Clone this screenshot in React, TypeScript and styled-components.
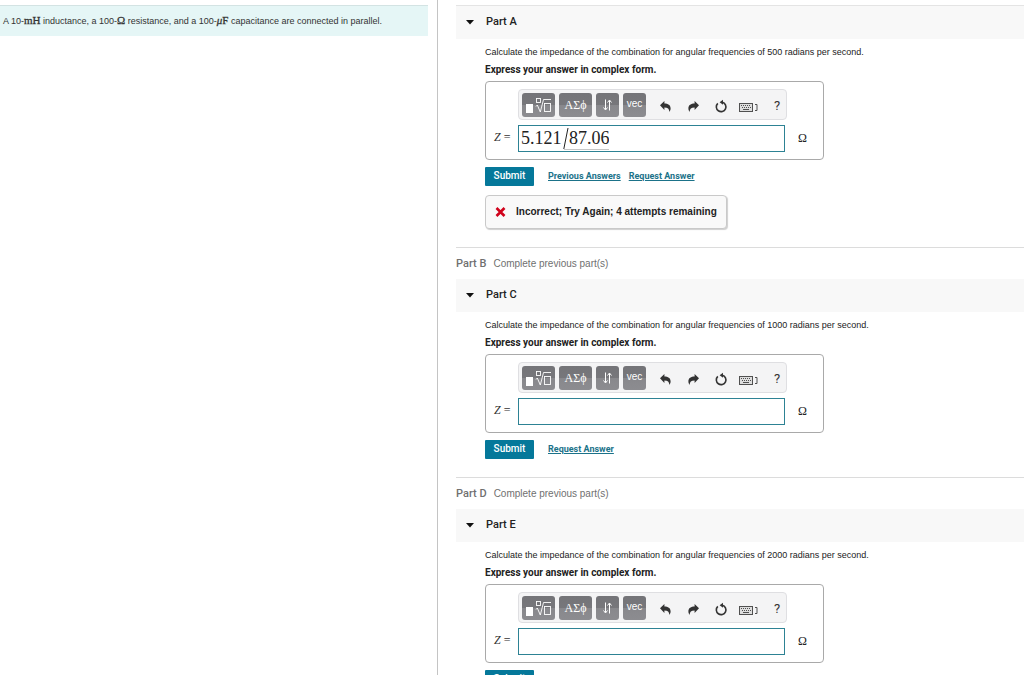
import React from "react";
import styled, { createGlobalStyle } from "styled-components";

const sans = `"Liberation Sans", Arial, sans-serif`;
const ui = `Roboto, "Liberation Sans", sans-serif`;
const serif = `"Liberation Serif", "Times New Roman", serif`;

const GlobalStyle = createGlobalStyle`
  *, *::before, *::after { box-sizing: border-box; }
  body { margin: 0; background: #fff; color: #222; font: 9px/18px ${sans}; }
  h2, p { margin: 0; }
  button, input { font: inherit; color: inherit; margin: 0; padding: 0; border: 0; background: none; }
  button { cursor: pointer; }
`;

const Page = styled.div`
  display: flex;
  height: 100vh;
  overflow: hidden;
`;

const Problem = styled.aside`
  flex: 0 0 438px;
  padding: 5px 9px 0 0;
  border-right: 1px solid #c4c4c4;
`;

const Statement = styled.p`
  padding: 6px 0 6px 3px;
  border-top: 1px solid #d3e3e3;
  background: #e5f6f6;
  color: #333;
`;

const Unit = styled.span`
  font-family: ${serif};
  font-size: 11px;
  line-height: 12px;
  -webkit-text-stroke: 0.3px currentColor;
`;

const Parts = styled.main`
  flex: 1;
  min-width: 0;
  padding: 5px 0 0 18px;
`;

const PartSection = styled.section<{ $first?: boolean }>`
  border-top: ${(p) => (p.$first ? "1px solid #e4e4e4" : "0")};
`;

const PartHeader = styled.button`
  display: flex;
  align-items: center;
  gap: 12px;
  width: 100%;
  height: 33px;
  padding: 0 10px 1px;
  background: #f8f8f8;
  font: 500 11px/18px ${ui};
  color: #222;
`;

const PartBody = styled.div`
  padding: 4px 29px 18px;
`;

const Instruction = styled.p`
  font: bold 10px/18px ${ui};
  margin-bottom: 2px;
`;

const AnswerBox = styled.div`
  display: grid;
  grid-template-columns: 24px 269px;
  row-gap: 5px;
  align-items: center;
  width: 339px;
  padding: 7px 8px;
  border: 1px solid #a9a9a9;
  border-radius: 4px;
`;

const Toolbar = styled.div`
  grid-column: 2;
  display: flex;
  align-items: center;
  height: 31px;
  padding: 0 3px;
  border: 1px solid #dfdfe2;
  border-radius: 4px;
  background: #f4f4f5;
`;

const PaletteKeys = styled.div`
  display: flex;
  gap: 4px;
  margin-right: 5px;
`;

const PaletteKey = styled.button<{ $wide?: boolean }>`
  display: flex;
  align-items: center;
  justify-content: center;
  width: ${(p) => (p.$wide ? 33 : 23)}px;
  height: 24px;
  border-radius: 3px;
  background: linear-gradient(#747478, #77777b 50%, #88888c 50%, #8c8c90);
  color: #fff;
`;

const GreekText = styled.span`
  font: 12px/18px ${serif};
`;

const VecText = styled.span`
  padding-bottom: 2px;
  font: 10px/18px ${sans};
`;

const ToolKeys = styled.div`
  display: flex;
  align-items: center;
  padding-top: 3px;
`;

const ToolKey = styled.button`
  display: flex;
  align-items: center;
  justify-content: center;
  width: 28px;
  height: 20px;
  color: #333;
  font: 13px/18px ${ui};
`;

const FieldLabel = styled.label`
  padding-bottom: 3px;
  font: 12px/18px ${serif};
  color: #333;
`;

const FieldRow = styled.div`
  display: flex;
  align-items: center;
`;

const fieldFrame = `
  flex: 0 0 267px;
  height: 27px;
  border: 1px solid #2d8294;
  background: #fff;
  font: 18px/25px ${serif};
`;

const Field = styled.input`
  && { ${fieldFrame} padding: 0 3px; }
`;

const PhasorFrame = styled.div`
  ${fieldFrame}
  display: flex;
  align-items: center;
  padding-left: 2px;
`;

const PhasorInput = styled.input`
  width: 42px;
  height: 23px;
`;

const AngleInput = styled(PhasorInput)`
  && {
    width: 40px;
    border-bottom: 1px solid #c6c6c6;
  }
`;

const OhmUnit = styled.span`
  margin-left: 13px;
  padding-bottom: 2px;
  font: 12px/18px ${serif};
  color: #222;
`;

const Actions = styled.div`
  display: flex;
  align-items: center;
  gap: 8px;
  height: 19px;
  margin-top: 7px;
`;

const Submit = styled.button`
  && {
    width: 49px;
    height: 19px;
    margin-right: 6px;
    padding-bottom: 1px;
    border-radius: 1px;
    background: #05789a;
    color: #fff;
    font: 500 10px/18px ${ui};
  }
`;

const ActionLink = styled.a`
  padding-bottom: 1px;
  font: bold 9px/18px ${ui};
  color: #1b7289;
`;

const Feedback = styled.div`
  display: inline-flex;
  align-items: center;
  gap: 10px;
  height: 34px;
  margin-top: 9px;
  padding: 0 9px;
  border: 1px solid #c9c9c9;
  border-radius: 4px;
  box-shadow: 1px 1px 1px #d0d0d0;
  background: #f9f9f9;
  font: bold 10px/18px ${sans};
  vertical-align: top;
`;

const LockedPart = styled.section`
  display: flex;
  align-items: center;
  gap: 7px;
  height: 32px;
  border-top: 1px solid #dcdcdc;
  font: 10px/18px ${sans};
  color: #707070;
`;

const LockedName = styled.h2`
  font: 500 11px/18px ${ui};
`;

const TemplateIcon = () => (
  <svg width="27" height="18" viewBox="0 0 27 18" fill="none" stroke="#fff">
    <rect x="1" y="8" width="7" height="9" fill="#fff" stroke="none" />
    <rect x="11.5" y="2.5" width="4" height="4" strokeWidth=".9" />
    <path d="M11 10.500l1.300-1.500 3 7 3.200-12.500h7.500" strokeWidth=".9" />
    <rect x="19.5" y="7.500" width="6" height="8" strokeWidth=".9" />
  </svg>
);

const ArrowsIcon = () => (
  <svg width="11" height="14" viewBox="0 0 11 14" fill="none" stroke="#fff">
    <path d="M3.500 1.500v10M1.500 9.500l2 2.500 2-2.500M7.500 12.500v-10M5.500 4.500l2-2.500 2 2.500" />
  </svg>
);

const UndoIcon = () => (
  <svg width="11" height="11" viewBox="0 0 11 11" fill="currentColor">
    <path d="M0 4.300L4.400 0v2.600c3.600 0 6.200 1.500 6.200 4.800 0 1.300-.5 2.500-1.300 3.400 .1-2.800-1.600-4.300-4.900-4.300v2.500z" />
  </svg>
);

const RedoIcon = () => (
  <svg width="11" height="11" viewBox="0 0 11 11" fill="currentColor">
    <path d="M11 4.300L6.600 0v2.600C3 2.600.4 4.100.4 7.400c0 1.300.5 2.500 1.300 3.400-.1-2.800 1.600-4.300 4.900-4.300v2.500z" />
  </svg>
);

const ResetIcon = () => (
  <svg width="14" height="14" viewBox="0 0 14 14">
    <path d="M3.800 4.400A4.800 4.800 0 1 0 8.300 3.200" fill="none" stroke="currentColor" strokeWidth="1.600" />
    <path d="M5.600 3.200L9 .8v5z" fill="currentColor" />
  </svg>
);

const KeyboardIcon = () => (
  <svg width="20" height="14" viewBox="0 0 20 14" fill="none">
    <rect x=".5" y="4.500" width="13" height="8" fill="#dedede" stroke="#505050" />
    <path d="M2 6.500h10M3 8.500h9" stroke="#505050" strokeDasharray="1 1" />
    <path d="M4 10.500h6" stroke="#505050" />
    <path d="M16 5.500h2v6h-2" stroke="#505050" />
  </svg>
);

const CaretIcon = () => (
  <svg width="8" height="5" viewBox="0 0 8 5">
    <path d="M0 0h8L4 4.500z" fill="#111" />
  </svg>
);

const CrossIcon = () => (
  <svg width="11" height="10" viewBox="0 0 11 10">
    <path d="M1.500 1l8 8M9.500 1l-8 8" stroke="#d0021b" strokeWidth="2.600" />
  </svg>
);

const AngleMark = () => (
  <svg width="6" height="25" viewBox="0 0 6 25">
    <path d="M.8 23L5 2" stroke="#222" fill="none" />
    <path d="M1 23.500h5" stroke="#c6c6c6" />
  </svg>
);

function MathToolbar() {
  return (
    <Toolbar>
      <PaletteKeys>
        <PaletteKey $wide aria-label="Templates"><TemplateIcon /></PaletteKey>
        <PaletteKey $wide><GreekText>ΑΣϕ</GreekText></PaletteKey>
        <PaletteKey aria-label="Arrows"><ArrowsIcon /></PaletteKey>
        <PaletteKey><VecText>vec</VecText></PaletteKey>
      </PaletteKeys>
      <ToolKeys>
        <ToolKey aria-label="Undo"><UndoIcon /></ToolKey>
        <ToolKey aria-label="Redo"><RedoIcon /></ToolKey>
        <ToolKey aria-label="Reset"><ResetIcon /></ToolKey>
        <ToolKey aria-label="Keyboard shortcuts"><KeyboardIcon /></ToolKey>
        <ToolKey aria-label="Help">?</ToolKey>
      </ToolKeys>
    </Toolbar>
  );
}

interface PartProps {
  name: string;
  frequency: number;
  first?: boolean;
  answer?: [string, string];
  feedback?: string;
}

function Part({ name, frequency, first, answer, feedback }: PartProps) {
  const id = `answer-${name}`;
  return (
    <PartSection $first={first}>
      <PartHeader aria-expanded="true"><CaretIcon />Part {name}</PartHeader>
      <PartBody>
        <p>Calculate the impedance of the combination for angular frequencies of {frequency} radians per second.</p>
        <Instruction>Express your answer in complex form.</Instruction>
        <AnswerBox>
          <MathToolbar />
          <FieldLabel htmlFor={id}><i>Z</i> =</FieldLabel>
          <FieldRow>
            {answer ? (
              <PhasorFrame>
                <PhasorInput id={id} defaultValue={answer[0]} />
                <AngleMark />
                <AngleInput aria-label="Angle" defaultValue={answer[1]} />
              </PhasorFrame>
            ) : (
              <Field id={id} />
            )}
            <OhmUnit>Ω</OhmUnit>
          </FieldRow>
        </AnswerBox>
        <Actions>
          <Submit>Submit</Submit>
          {answer && <ActionLink href="#previous">Previous Answers</ActionLink>}
          <ActionLink href="#request">Request Answer</ActionLink>
        </Actions>
        {feedback && <Feedback role="status"><CrossIcon />{feedback}</Feedback>}
      </PartBody>
    </PartSection>
  );
}

const Locked = ({ name }: { name: string }) => (
  <LockedPart>
    <LockedName>Part {name}</LockedName>
    <span>Complete previous part(s)</span>
  </LockedPart>
);

export default function App() {
  return (
    <>
      <GlobalStyle />
      <Page>
        <Problem>
          <Statement>
            A 10-<Unit>mH</Unit> inductance, a 100-<Unit>Ω</Unit> resistance, and a 100-<Unit><i>μ</i>F</Unit> capacitance are connected in parallel.
          </Statement>
        </Problem>
        <Parts>
          <Part name="A" frequency={500} first answer={["5.121", "87.06"]} feedback="Incorrect; Try Again; 4 attempts remaining" />
          <Locked name="B" />
          <Part name="C" frequency={1000} />
          <Locked name="D" />
          <Part name="E" frequency={2000} />
        </Parts>
      </Page>
    </>
  );
}
